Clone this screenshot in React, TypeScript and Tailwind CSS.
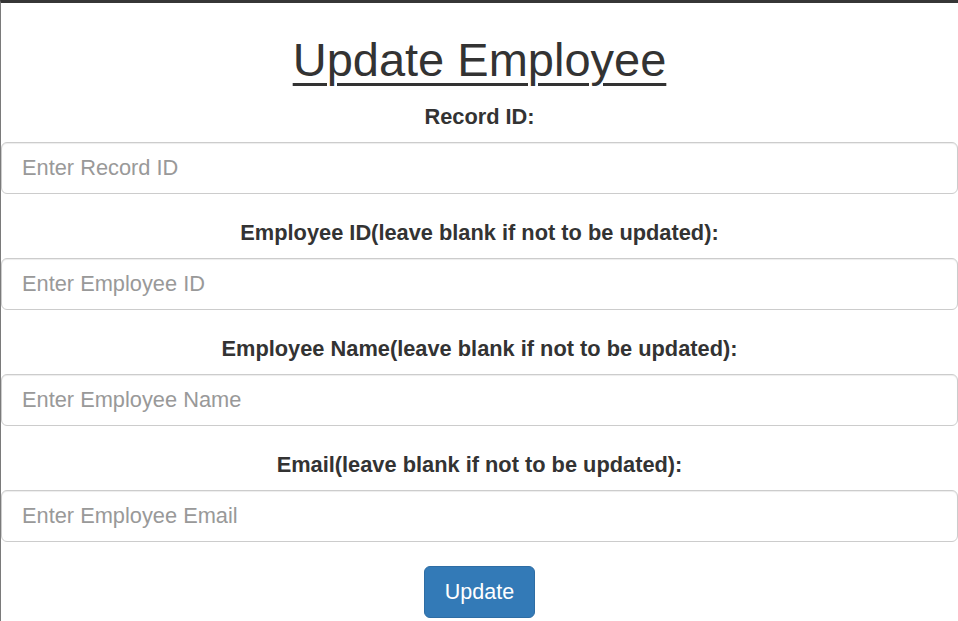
const fields = [
  { id: 1, label: 'Record ID:', placeholder: 'Enter Record ID' },
  { id: 2, label: 'Employee ID(leave blank if not to be updated):', placeholder: 'Enter Employee ID' },
  { id: 3, label: 'Employee Name(leave blank if not to be updated):', placeholder: 'Enter Employee Name' },
  { id: 4, label: 'Email(leave blank if not to be updated):', placeholder: 'Enter Employee Email' }
];

export default function App() {
  return (
    <div
      className="min-h-[621px] bg-white border-t-[3px] border-t-[#363636] border-l border-l-[#7a7a7a] text-[#333]"
      style={{ fontFamily: '"Liberation Sans", Arial, sans-serif' }}
    >
      {/* Title */}
      <h1 className="mt-[32px] mb-[17px] text-center text-[47px] leading-[50px] font-normal underline decoration-[3px] underline-offset-[7px]">
        Update Employee
      </h1>

      {/* Form */}
      <form className="flex flex-col">
        {fields.map((field) => (
          <div key={field.id} className="mb-[24px]">
            <label className="block text-center text-[21.8px] leading-[30px] font-bold mb-[10px]">
              {field.label}
            </label>
            <input
              type="text"
              placeholder={field.placeholder}
              className="block w-full h-[52px] px-[20px] text-[21.8px] text-[#555] placeholder:text-[#999] bg-white border border-[#ccc] rounded-[6px] shadow-[inset_0_1px_1px_rgba(0,0,0,0.075)] outline-none"
            />
          </div>
        ))}
        <div className="flex justify-center">
          <button
            type="button"
            className="w-[111px] h-[52px] bg-[#337ab7] border border-[#2e6da4] rounded-[6px] text-white text-[21.5px]"
          >
            Update
          </button>
        </div>
      </form>
    </div>
  );
}
